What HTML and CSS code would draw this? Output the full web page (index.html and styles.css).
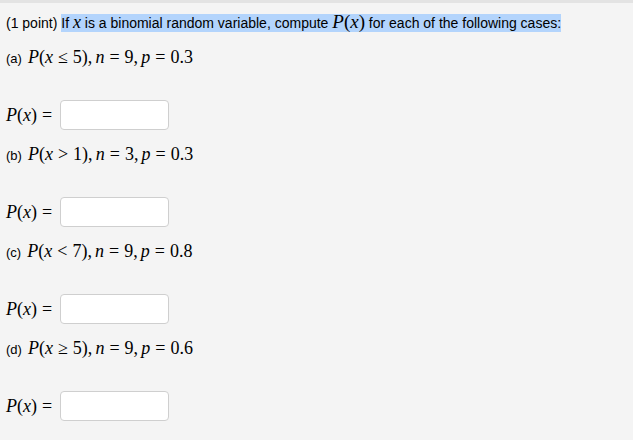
FILE: index.html
```html
<!DOCTYPE html>
<html>
<head>
<meta charset="utf-8">
<link rel="stylesheet" href="styles.css">
</head>
<body>
<div class="page">
  <p class="intro">(1 point) <span class="sel">If <span class="m"><i>x</i></span> is a binomial random variable, compute <span class="m big"><i>P</i>(<i>x</i>)</span> for each of the following cases:</span></p>

  <div class="part">
    <div class="q"><span class="lbl">(a)</span> <span class="m"><i>P</i>(<i>x</i><span class="rel">≤</span>5)<span class="cm">,</span><i>n</i><span class="rel">=</span>9<span class="cm">,</span><i>p</i><span class="rel">=</span>0.3</span></div>
    <div class="ans"><span class="m"><i>P</i>(<i>x</i>)<span class="rel">=</span></span><span class="box"></span></div>
  </div>

  <div class="part">
    <div class="q"><span class="lbl">(b)</span> <span class="m"><i>P</i>(<i>x</i><span class="rel">&gt;</span>1)<span class="cm">,</span><i>n</i><span class="rel">=</span>3<span class="cm">,</span><i>p</i><span class="rel">=</span>0.3</span></div>
    <div class="ans"><span class="m"><i>P</i>(<i>x</i>)<span class="rel">=</span></span><span class="box"></span></div>
  </div>

  <div class="part">
    <div class="q"><span class="lbl">(c)</span> <span class="m"><i>P</i>(<i>x</i><span class="rel">&lt;</span>7)<span class="cm">,</span><i>n</i><span class="rel">=</span>9<span class="cm">,</span><i>p</i><span class="rel">=</span>0.8</span></div>
    <div class="ans"><span class="m"><i>P</i>(<i>x</i>)<span class="rel">=</span></span><span class="box"></span></div>
  </div>

  <div class="part">
    <div class="q"><span class="lbl">(d)</span> <span class="m"><i>P</i>(<i>x</i><span class="rel">≥</span>5)<span class="cm">,</span><i>n</i><span class="rel">=</span>9<span class="cm">,</span><i>p</i><span class="rel">=</span>0.6</span></div>
    <div class="ans"><span class="m"><i>P</i>(<i>x</i>)<span class="rel">=</span></span><span class="box"></span></div>
  </div>
</div>
</body>
</html>
```

FILE: styles.css
```css
html, body {
  margin: 0;
  padding: 0;
}
body {
  background: #f4f4f4;
  border-top: 3px solid #e3e3e3;
  font-family: "Liberation Sans", Arial, sans-serif;
  font-size: 14px;
  color: #000;
  height: 437px;
}
.page {
  padding: 10px 6px 0 6px;
}
.intro {
  margin: 0 0 1px 0;
  line-height: 18px;
}
.sel {
  background: #b3d4fc;
  padding: 1px 0;
}
.m {
  font-family: "Liberation Serif", "Times New Roman", serif;
  font-size: 18px;
}
.m i {
  font-style: italic;
}
.m.big {
  font-size: 19px;
}
.rel {
  margin: 0 0.28em;
}
.cm {
  margin-right: 0.17em;
}
.part {
  display: flex;
  flex-direction: column;
}
.q {
  margin-top: 14px;
  display: flex;
  align-items: baseline;
  gap: 6px;
  height: 20px;
}
.lbl {
  font-size: 13px;
}
.ans {
  margin-top: 33px;
  display: flex;
  align-items: center;
  gap: 3px;
  height: 30px;
}
.box {
  display: block;
  width: 107px;
  height: 28px;
  background: #fff;
  border: 1px solid #cfcfcf;
  border-radius: 4px;
}
```
